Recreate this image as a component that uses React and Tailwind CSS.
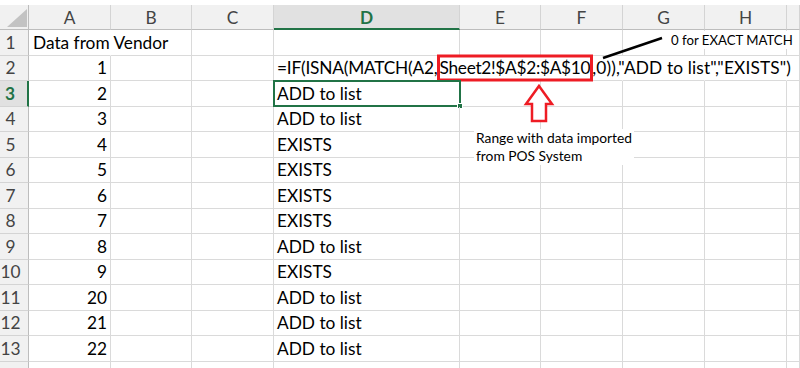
import React from "react";

const HDR = "bg-[#f1f1f1] text-[#444444]";

function ColHeader({ label, w, sel }) {
  return (
    <div
      className={`${w} shrink-0 flex items-center justify-center pt-[2px] border-r border-[#d4d4d4] ${
        sel
          ? "bg-[#e1e1e1] border-b-2 border-b-[#217346] text-[#217346] font-bold"
          : `${HDR} border-b border-b-[#bdbdbd]`
      }`}
    >
      {label}
    </div>
  );
}

function Row({ n, h, a, aSpill, d, dSpill, sel, children }) {
  return (
    <div className={`flex shrink-0 ${h}`}>
      <div
        className={`w-[29px] shrink-0 flex items-center justify-center pr-[7px] border-b border-[#d4d4d4] ${
          sel
            ? "bg-[#e1e1e1] border-r-2 border-r-[#217346] text-[#217346] font-bold"
            : `${HDR} border-r border-r-[#bdbdbd]`
        }`}
      >
        {n}
      </div>
      <div
        className={`w-[82px] shrink-0 flex items-center whitespace-nowrap border-b border-r border-[#dadada] ${
          aSpill ? "justify-start pl-[4px] border-r-transparent" : "justify-end pr-[3px]"
        }`}
      >
        {a}
      </div>
      <div className="w-[81px] shrink-0 border-b border-r border-[#dadada]" />
      <div className="w-[82px] shrink-0 border-b border-r border-[#dadada]" />
      <div
        className={`relative w-[186px] shrink-0 flex items-center whitespace-nowrap pl-[3px] border-b border-r border-[#dadada] ${
          dSpill ? "border-r-transparent" : ""
        }`}
      >
        {d}
        {children}
      </div>
      <div className={`w-[81px] shrink-0 border-b border-r border-[#dadada] ${dSpill ? "border-r-transparent" : ""}`} />
      <div className={`w-[82px] shrink-0 border-b border-r border-[#dadada] ${dSpill ? "border-r-transparent" : ""}`} />
      <div className={`w-[82px] shrink-0 border-b border-r border-[#dadada] ${dSpill ? "border-r-transparent" : ""}`} />
      <div className={`w-[82px] shrink-0 border-b border-r border-[#dadada] ${dSpill ? "border-r-transparent" : ""}`} />
      <div className="w-[13px] shrink-0 border-b border-r border-[#dadada]" />
    </div>
  );
}

const formula = (
  <span>
    <span className="tracking-[-0.2px]">=IF(ISNA(MATCH(A2,</span>
    <span className="relative ml-[2px] mr-[2px] tracking-[-0.3px]">
      Sheet2!$A$2:$A$10
      <span className="absolute -left-[3px] -right-[3px] top-1/2 -translate-y-1/2 h-[27px] border-[3px] border-[#ee1c24]" />
    </span>
    <span className="tracking-[0.15px]">,0)),"ADD to list","EXISTS")</span>
  </span>
);

const data = [
  ["2", "ADD to list"],
  ["3", "ADD to list"],
  ["4", "EXISTS"],
  ["5", "EXISTS"],
  ["6", "EXISTS"],
  ["7", "EXISTS"],
  ["8", "ADD to list"],
  ["9", "EXISTS"],
  ["20", "ADD to list"],
  ["21", "ADD to list"],
  ["22", "ADD to list"],
];

export default function App() {
  return (
    <div className="relative w-[800px] h-[368px] overflow-hidden bg-white text-black font-[Lato,sans-serif] text-[17.3px] leading-[20px] flex flex-col pt-[5px]">
      {/* column headers */}
      <div className="flex shrink-0 h-[25px]">
        <div className={`w-[29px] shrink-0 ${HDR} border-r border-b border-[#bdbdbd] flex items-end justify-end pr-[1px] pb-[2px]`}>
          <svg width="20" height="18" viewBox="0 0 20 18">
            <polygon points="20,0 20,18 0,18" fill="#c3c3c3" />
          </svg>
        </div>
        <ColHeader label="A" w="w-[82px]" />
        <ColHeader label="B" w="w-[81px]" />
        <ColHeader label="C" w="w-[82px]" />
        <ColHeader label="D" w="w-[186px]" sel />
        <ColHeader label="E" w="w-[81px]" />
        <ColHeader label="F" w="w-[82px]" />
        <ColHeader label="G" w="w-[82px]" />
        <ColHeader label="H" w="w-[82px]" />
        <ColHeader label="" w="w-[13px]" />
      </div>

      <Row n="1" h="h-[26px]" a="Data from Vendor" aSpill />
      <Row n="2" h="h-[25px]" a="1" d={formula} dSpill />
      {data.map(([a, d], i) => {
        const n = i + 3;
        const h = i % 2 === 0 ? "h-[26px]" : "h-[25px]";
        return (
          <Row key={n} n={String(n)} h={h} a={a} d={d} sel={n === 3}>
            {n === 3 && (
              <div className="absolute -left-[1px] -top-[1px] w-[188px] h-[27px] border-2 border-[#217346]">
                <div className="absolute -right-[4px] -bottom-[4px] w-[6px] h-[6px] bg-[#217346] border border-white" />
              </div>
            )}
          </Row>
        );
      })}
      <Row n="" h="h-[25px]" />

      {/* annotations */}
      <svg className="absolute left-0 top-0 pointer-events-none" width="800" height="368">
        <line x1="603" y1="58" x2="662" y2="38" stroke="#000" strokeWidth="2.5" />
        <polygon
          points="539,86 552,104 546,104 546,121 532,121 532,104 526,104"
          fill="#ffffff"
          stroke="#ee1c24"
          strokeWidth="2.5"
          strokeLinejoin="miter"
        />
      </svg>
      <div className="absolute left-[671px] top-[31px] text-[13.2px] leading-[18px] bg-white whitespace-nowrap">
        0 for EXACT MATCH
      </div>
      <div className="absolute left-[474px] top-[129px] text-[13.8px] leading-[18px] bg-white whitespace-nowrap px-[2px]">
        <div>Range with data imported</div>
        <div>from POS System</div>
      </div>
    </div>
  );
}
